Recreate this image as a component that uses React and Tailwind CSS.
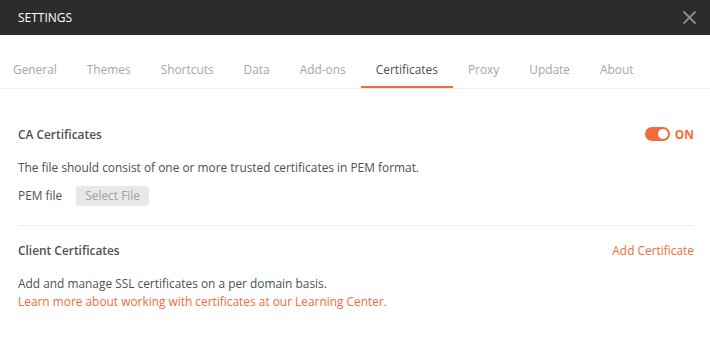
import React, { useState } from 'react';

const tabs = ['General', 'Themes', 'Shortcuts', 'Data', 'Add-ons', 'Certificates', 'Proxy', 'Update', 'About'];

export default function App() {
  const [active, setActive] = useState('Certificates');
  const [caOn, setCaOn] = useState(true);

  return (
    <div className="w-[710px] h-[346px] bg-white overflow-hidden font-['Open_Sans',sans-serif] text-[11.9px] text-[#505050]">
      {/* header */}
      <div className="h-[35px] bg-[#2c2c2c] flex items-center justify-between pl-[18px] pr-[13px]">
        <span className="text-white text-[12px] leading-none">SETTINGS</span>
        <svg width="15" height="15" viewBox="0 0 15 15" className="text-[#8c8c8c]">
          <path d="M1.5 1.5 L13.5 13.5 M13.5 1.5 L1.5 13.5" stroke="currentColor" strokeWidth="1.8" />
        </svg>
      </div>

      {/* tabs */}
      <div className="mt-[18px] border-b border-[#eeeeee] flex">
        <div className="flex -ml-[2px]">
          {tabs.map((t) => (
            <button
              key={t}
              onClick={() => setActive(t)}
              className={`h-[35px] px-[15px] border-b-2 leading-none ${
                active === t ? 'border-[#f26b3a] text-[#505050]' : 'border-transparent text-[#a6a6a6]'
              }`}
            >
              {t}
            </button>
          ))}
        </div>
      </div>

      <div className="pl-[18px] pr-[16px]">
        {/* CA certificates */}
        <div className="pt-[36px] flex items-center justify-between leading-[18px]">
          <span className="font-semibold">CA Certificates</span>
          <button onClick={() => setCaOn(!caOn)} className="flex items-center gap-[5px]">
            <span className={`w-[25px] h-[14px] rounded-full flex items-center p-[2px] ${caOn ? 'bg-[#f26b3a] justify-end' : 'bg-[#cccccc] justify-start'}`}>
              <span className="w-[10px] h-[10px] rounded-full bg-white" />
            </span>
            <span className={`font-bold ${caOn ? 'text-[#f26b3a]' : 'text-[#a6a6a6]'}`}>{caOn ? 'ON' : 'OFF'}</span>
          </button>
        </div>
        <p className="mt-[15px] leading-[18px]">The file should consist of one or more trusted certificates in PEM format.</p>
        <div className="mt-[10px] flex items-center gap-[14px]">
          <span>PEM file</span>
          <button className="h-[20px] px-[9px] rounded-[3px] bg-[#e8e8e8] text-[#a0a0a0] leading-none">Select File</button>
        </div>

        <div className="mt-[19px] border-t border-[#eeeeee]" />

        {/* client certificates */}
        <div className="mt-[15px] flex items-center justify-between leading-[18px]">
          <span className="font-semibold">Client Certificates</span>
          <a className="text-[#f26b3a] cursor-pointer">Add Certificate</a>
        </div>
        <p className="mt-[15px] leading-[18px]">Add and manage SSL certificates on a per domain basis.</p>
        <a className="block leading-[18px] text-[#f26b3a] cursor-pointer">Learn more about working with certificates at our Learning Center.</a>
      </div>
    </div>
  );
}
